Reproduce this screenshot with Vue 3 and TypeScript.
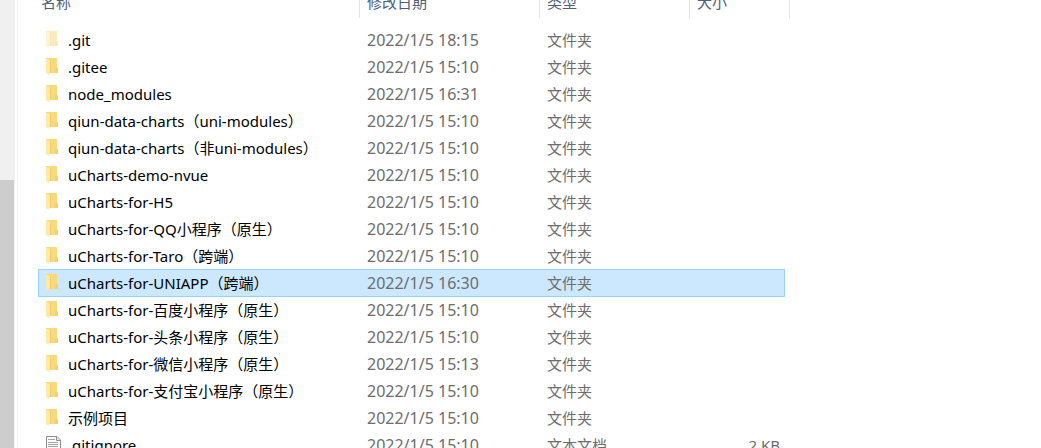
<script setup lang="ts">
interface Entry {
  name: string
  date: string
  type: string
  size?: string
  hidden?: boolean
  selected?: boolean
}

const folder = '文件夹'

const entries: Entry[] = [
  { name: '.git', date: '2022/1/5 18:15', type: folder, hidden: true },
  { name: '.gitee', date: '2022/1/5 15:10', type: folder },
  { name: 'node_modules', date: '2022/1/5 16:31', type: folder },
  { name: 'qiun-data-charts（uni-modules）', date: '2022/1/5 15:10', type: folder },
  { name: 'qiun-data-charts（非uni-modules）', date: '2022/1/5 15:10', type: folder },
  { name: 'uCharts-demo-nvue', date: '2022/1/5 15:10', type: folder },
  { name: 'uCharts-for-H5', date: '2022/1/5 15:10', type: folder },
  { name: 'uCharts-for-QQ小程序（原生）', date: '2022/1/5 15:10', type: folder },
  { name: 'uCharts-for-Taro（跨端）', date: '2022/1/5 15:10', type: folder },
  { name: 'uCharts-for-UNIAPP（跨端）', date: '2022/1/5 16:30', type: folder, selected: true },
  { name: 'uCharts-for-百度小程序（原生）', date: '2022/1/5 15:10', type: folder },
  { name: 'uCharts-for-头条小程序（原生）', date: '2022/1/5 15:10', type: folder },
  { name: 'uCharts-for-微信小程序（原生）', date: '2022/1/5 15:13', type: folder },
  { name: 'uCharts-for-支付宝小程序（原生）', date: '2022/1/5 15:10', type: folder },
  { name: '示例项目', date: '2022/1/5 15:10', type: folder },
  { name: '.gitignore', date: '2022/1/5 15:10', type: '文本文档', size: '2 KB' },
]
</script>

<template>
  <div class="explorer">
    <div class="scrollbar"><div class="thumb"></div></div>
    <main class="pane">
      <table class="files">
        <thead>
          <tr class="head">
            <th scope="col">名称</th>
            <th scope="col">修改日期</th>
            <th scope="col">类型</th>
            <th scope="col">大小</th>
          </tr>
        </thead>
        <tbody>
          <tr v-for="entry in entries" :key="entry.name" class="row" :class="{ selected: entry.selected }">
            <td class="name">
              <svg v-if="entry.type === folder" class="icon" :class="{ faded: entry.hidden }" viewBox="0 0 16 18" aria-hidden="true">
                <path d="M0 0H11V10L12 11V15H1Z" fill="#f8d97c" />
                <path d="M4 2L5 3V15H4Z" fill="#f0cd6c" />
                <path d="M9 10L11 9.5L12 11V15H9Z" fill="#f5d070" />
                <path d="M0 .5L3 1.5L4 2.5V14L3 17L0 15Z" fill="#ffe9a6" />
              </svg>
              <svg v-else class="icon" viewBox="0 0 16 18" aria-hidden="true">
                <path d="M.5 .5H11L14.5 4V17.5H.5Z" fill="#fafafa" stroke="#8c8c8c" />
                <path d="M10.5 .5V4.5H14.5" fill="#e4e4e4" stroke="#8c8c8c" />
                <path d="M2 3.5H9M2 6.5H12M2 8.5H12M2 10.5H12M2 12.5H12" stroke="#a3a3a3" />
              </svg>
              <span>{{ entry.name }}</span>
            </td>
            <td class="date">{{ entry.date }}</td>
            <td>{{ entry.type }}</td>
            <td class="size">{{ entry.size }}</td>
          </tr>
        </tbody>
      </table>
    </main>
  </div>
</template>

<style>
body {
  margin: 0;
  background: #fff;
}
</style>

<style scoped>
.explorer {
  display: flex;
  height: 100vh;
  overflow: hidden;
  font-family: "Noto Sans", "Noto Sans CJK SC", sans-serif;
  font-size: 15px;
  line-height: 20px;
  color: #6d6d6d;
}

.scrollbar {
  display: flex;
  flex: none;
  width: 15px;
  background: #f0f0f0;
}

.thumb {
  width: 14px;
  margin-top: 180px;
  background: #cdcdcd;
}

.pane {
  flex: 1;
  margin-left: 2px;
  padding-left: 20px;
  border-left: 1px solid #f5f5f5;
}

.files,
.files thead,
.files tbody {
  display: block;
}

.head,
.row {
  display: grid;
  grid-template-columns: 322px 180px 150px 100px;
}

.head {
  height: 18px;
  margin-bottom: 8px;
}

.head th {
  display: flex;
  align-items: flex-end;
  height: 18px;
  box-sizing: border-box;
  padding: 0 7px 6px;
  border-right: 1px solid #e5e5e5;
  font-weight: 400;
  color: #4c607a;
}

.head th:first-child {
  padding-left: 3px;
}

.row {
  width: 752px;
  height: 27px;
  align-items: center;
}

.row td {
  padding: 0 0 0 7px;
  white-space: nowrap;
}

.row.selected {
  grid-template-columns: 321px 180px 150px 94px;
  width: 745px;
  height: 26px;
  margin-bottom: -1px;
  border: 1px solid #99d1ff;
  background: #cce8ff;
}

.row .name {
  display: flex;
  align-items: center;
  gap: 6px;
  color: #000;
  padding-left: 8px;
}

.row.selected .name {
  padding-left: 7px;
}

.row .date {
  font-size: 16px;
}

.row .size {
  padding: 0 10px 0 0;
  text-align: right;
}

.icon {
  flex: none;
  width: 16px;
  height: 18px;
}

.faded {
  opacity: 0.5;
}
</style>
